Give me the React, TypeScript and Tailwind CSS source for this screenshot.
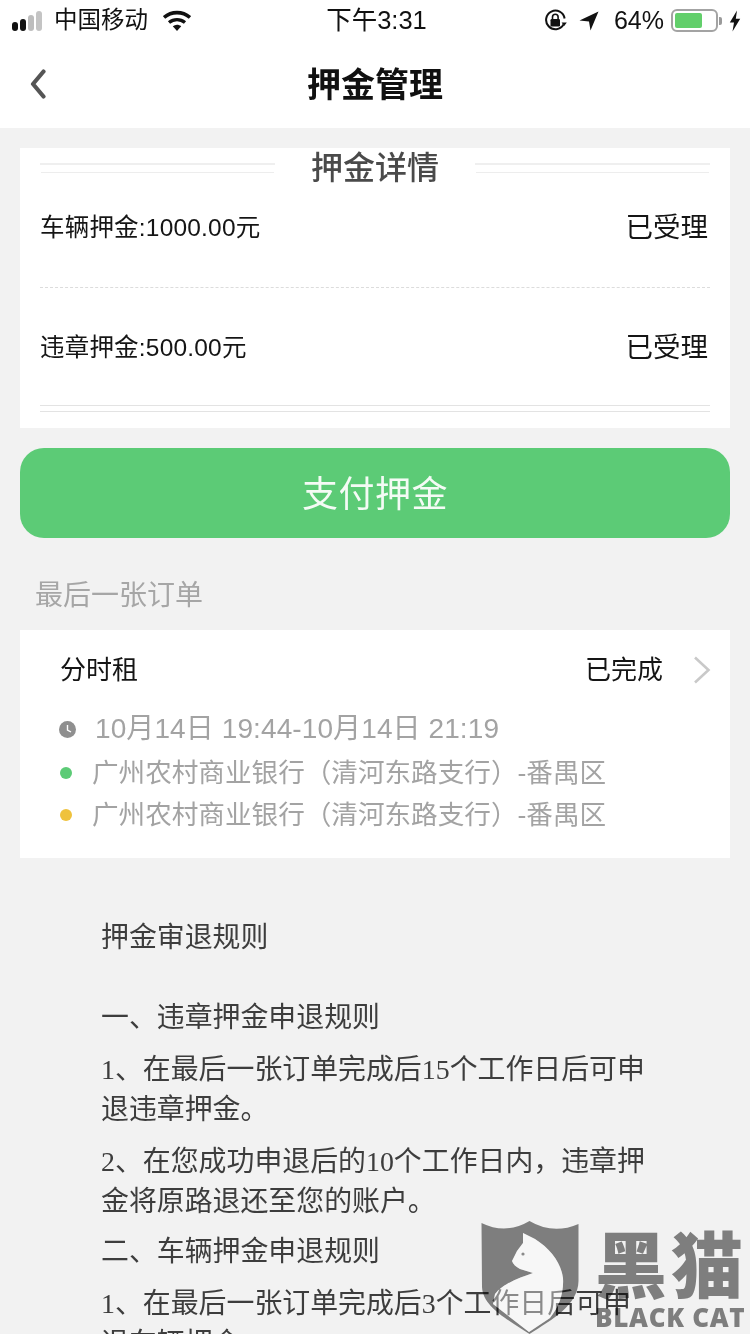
const cjk = 'font-["Liberation_Sans","Noto_Sans_CJK_SC",sans-serif]';

function SignalBars() {
  const bars = [
    { h: 'h-[9px]', c: 'bg-[#111]' },
    { h: 'h-[12px]', c: 'bg-[#111]' },
    { h: 'h-[16px]', c: 'bg-[#bdbdbd]' },
    { h: 'h-[20px]', c: 'bg-[#c4c4c4]' },
  ];
  return (
    <div className="flex items-end gap-[2px]">
      {bars.map((b, i) => (
        <div key={i} className={`w-[6px] rounded-[3px] ${b.h} ${b.c}`} />
      ))}
    </div>
  );
}

function StatusBar() {
  return (
    <div className="flex h-[40px] items-center justify-between pl-[12px] pr-[9px] pt-[1px] text-[#111]">
      <div className="flex w-[250px] items-center">
        <SignalBars />
        <span className="ml-[12px] text-[23.5px] leading-none">中国移动</span>
        <svg className="ml-[15px]" width="28" height="22" viewBox="0 0 28 22">
          <path d="M1 7.5C8.5 1 19.5 1 27 7.5" fill="none" stroke="#111" strokeWidth="3.6" />
          <path d="M6 12.5C10.8 8.6 17.2 8.6 22 12.5" fill="none" stroke="#111" strokeWidth="3.4" />
          <path d="M9.8 16.2C12.4 14.2 15.6 14.2 18.2 16.2L14 21Z" fill="#111" />
        </svg>
      </div>
      <span className="text-[25.5px] leading-none">下午3:31</span>
      <div className="flex w-[250px] items-center justify-end">
        <svg width="23" height="23" viewBox="0 0 23 23">
          <path d="M19.5 15.5A9.3 9.3 0 1 1 20.6 9.5" fill="none" stroke="#111" strokeWidth="2" />
          <path d="M17.6 13.5h5.2l-2.6 3.4z" fill="#111" />
          <rect x="6.5" y="10" width="9.5" height="7.5" rx="1.2" fill="#111" />
          <path d="M8.5 10V8a2.8 2.8 0 0 1 5.6 0v2" fill="none" stroke="#111" strokeWidth="1.6" />
        </svg>
        <svg className="ml-[12px]" width="20" height="20" viewBox="0 0 20 20">
          <path d="M19.5 0.5L0.5 9.5L10 10.5L11.5 19.5Z" fill="#111" />
        </svg>
        <span className="ml-[15px] text-[25px] leading-none">64%</span>
        <div className="ml-[7px] h-[23px] w-[47px] rounded-[6px] border-2 border-[#a3a3a3] p-[2px]">
          <div className="h-full w-[27px] rounded-[2px] bg-[#62cf6b]" />
        </div>
        <div className="ml-[1px] h-[8px] w-[3px] rounded-r-[2px] bg-[#9a9a9a]" />
        <svg className="ml-[7px]" width="12" height="22" viewBox="0 0 12 22">
          <path d="M8 0.5L0.8 12.5H5L3.5 21.5L11.2 8.8H6.8Z" fill="#111" />
        </svg>
      </div>
    </div>
  );
}

function NavBar() {
  return (
    <div className="relative flex h-[88px] items-center justify-center bg-white">
      <svg className="absolute left-[28px] top-[29px]" width="20" height="30" viewBox="0 0 20 30">
        <path d="M15.5 2.5L5 15L15.5 27.5" fill="none" stroke="#555" strokeWidth="4.2" strokeLinecap="round" strokeLinejoin="round" />
      </svg>
      <span className="pt-[2px] text-[34px] font-bold leading-none text-[#111]">押金管理</span>
    </div>
  );
}

function DepositRow({ label, first }: { label: string; first: boolean }) {
  return (
    <div
      className={`flex justify-between pr-[2px] text-[#151515] ${
        first ? 'h-[100px] border-b border-dashed border-[#dcdcdc] pt-[22px]' : 'h-[117px] pt-[42px]'
      }`}
    >
      <span className="text-[24.5px] leading-[36px] tracking-[0.2px]">{label}</span>
      <span className="text-[27.5px] leading-[36px]">已受理</span>
    </div>
  );
}

function DoubleLine() {
  return (
    <div className="flex flex-1 flex-col gap-[7px]">
      <div className="h-[2px] bg-[#efefef]" />
      <div className="mx-[1px] h-px bg-[#ededed]" />
    </div>
  );
}

function DepositCard() {
  return (
    <div className="mx-[20px] mt-[20px] h-[280px] bg-white px-[20px]">
      <div className="flex h-[40px] items-center">
        <DoubleLine />
        <span className="px-[36px] text-[32px] font-medium leading-none text-[#4a4a4a]">押金详情</span>
        <DoubleLine />
      </div>
      <DepositRow label="车辆押金:1000.00元" first />
      <DepositRow label="违章押金:500.00元" first={false} />
      <div className="flex flex-col gap-[5px]">
        <div className="h-px bg-[#e3e3e3]" />
        <div className="h-px bg-[#e3e3e3]" />
      </div>
    </div>
  );
}

function OrderCard() {
  return (
    <div className="mx-[20px] mt-[16px] h-[228px] bg-white pl-[40px] pr-[19px]">
      <div className="flex h-[80px] items-center justify-between text-[#151515]">
        <span className="text-[26px] leading-none">分时租</span>
        <div className="flex items-center">
          <span className="text-[26px] leading-none">已完成</span>
          <svg className="ml-[30px]" width="18" height="28" viewBox="0 0 18 28">
            <path d="M2 1.5L15.5 14L2 26.5" fill="none" stroke="#c9c9c9" strokeWidth="2.6" />
          </svg>
        </div>
      </div>
      <div className="flex h-[38px] items-center text-[#a3a3a3]">
        <svg className="ml-[-1px]" width="17" height="17" viewBox="0 0 17 17">
          <circle cx="8.5" cy="8.5" r="8.5" fill="#8f8f8f" />
          <path d="M8.5 4v5l3.5 2" fill="none" stroke="#fff" strokeWidth="1.4" />
        </svg>
        <span className="ml-[19px] text-[28px] leading-none tracking-[0.1px]">10月14日 19:44-10月14日 21:19</span>
      </div>
      <div className="mt-[4px] flex h-[42px] items-center text-[#a3a3a3]">
        <div className="h-[12px] w-[12px] rounded-full bg-[#5ccb76]" />
        <span className="ml-[20px] text-[26.6px] leading-none">广州农村商业银行（清河东路支行）-番禺区</span>
      </div>
      <div className="flex h-[42px] items-center text-[#a3a3a3]">
        <div className="h-[12px] w-[12px] rounded-full bg-[#efc23d]" />
        <span className="ml-[20px] text-[26.6px] leading-none">广州农村商业银行（清河东路支行）-番禺区</span>
      </div>
    </div>
  );
}

function Rules() {
  return (
    <div className='ml-[101px] w-[550px] pt-[60px] font-["Liberation_Serif","Noto_Sans_CJK_SC",serif] text-[27.9px] leading-[40px] text-[#3d3d3d]'>
      <p>押金审退规则</p>
      <p className="mt-[40px]">一、违章押金申退规则</p>
      <p className="mt-[12px]">1、在最后一张订单完成后15个工作日后可申退违章押金。</p>
      <p className="mt-[12px]">2、在您成功申退后的10个工作日内，违章押金将原路退还至您的账户。</p>
      <p className="mt-[10px]">二、车辆押金申退规则</p>
      <p className="mt-[12px]">1、在最后一张订单完成后3个工作日后可申退车辆押金。</p>
    </div>
  );
}

const catPath =
  'M42 12L54 18C70 28 80 42 82 57C83 72 78 86 69 97L48 111L12 83L14 73C18 68 22 65 26 63C34 58 44 55 52 52L39 48C35 46 32 43 31 40L36 30L42 22Z';

function Watermark() {
  return (
    <div className="absolute left-[481px] top-[1221px] flex h-[113px] w-[269px]">
      <svg width="98" height="113" viewBox="0 0 98 113" className="shrink-0">
        <path
          className="mix-blend-multiply"
          fillRule="evenodd"
          d={`M0.5 2Q25 14 48.5 0Q72 14 97.5 3V60C97 84 72 98 48.5 113C26 98 2 86 1 66Z${catPath}`}
          fill="#858585"
        />
        <path d={catPath} fill="#ffffff" fillOpacity="0.4" />
        <circle cx="42" cy="33" r="1.6" fill="#8a8a8a" />
      </svg>
      <div className="ml-[16px] flex flex-col mix-blend-multiply">
        <span className="mt-[10px] text-[72px] font-black leading-[72px] tracking-[4px] text-[#858585]">黑猫</span>
        <span className="mt-[2px] font-['Open_Sans',sans-serif] text-[26px] font-extrabold leading-[24px] tracking-[0.7px] text-[#858585]">
          BLACK CAT
        </span>
      </div>
    </div>
  );
}

export default function App() {
  return (
    <div className={`relative h-[1334px] w-[750px] overflow-hidden bg-[#f2f2f2] ${cjk}`}>
      <div className="bg-white">
        <StatusBar />
      </div>
      <NavBar />
      <DepositCard />
      <button className="mx-[20px] mt-[20px] flex h-[90px] w-[710px] items-center justify-center rounded-[24px] bg-[#5ccb76] pt-[3px] text-[36px] tracking-[0.5px] text-[#f4fbf5]">
        支付押金
      </button>
      <div className="ml-[35px] mt-[38px] pt-[2px] text-[28px] leading-[36px] text-[#a6a6a6]">最后一张订单</div>
      <OrderCard />
      <Rules />
      <Watermark />
    </div>
  );
}
